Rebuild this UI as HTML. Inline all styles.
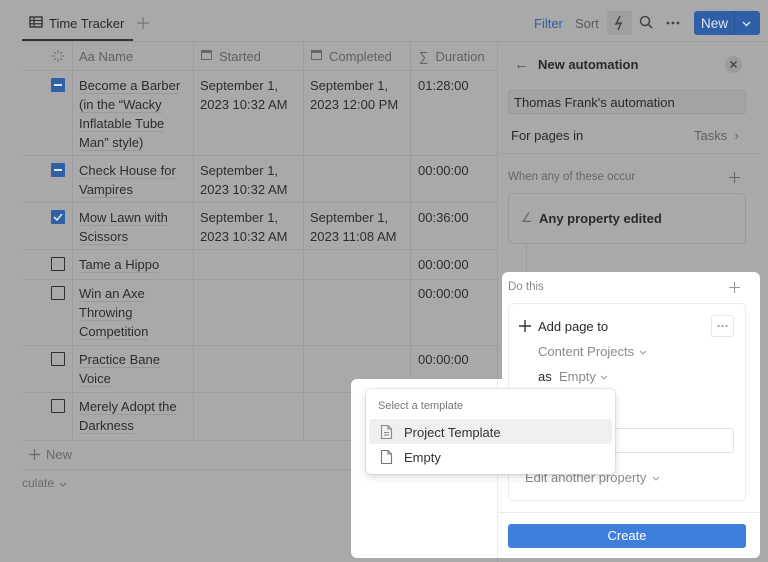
<!DOCTYPE html>
<html><head><meta charset="utf-8"><style>
*{box-sizing:border-box;margin:0;padding:0}
svg{display:block}
body{width:768px;height:562px;overflow:hidden;background:#a9a9a9;font-family:"Liberation Sans",sans-serif;color:#2a2a28;position:relative;font-size:13px}
.a{position:absolute;white-space:nowrap}
.vl{position:absolute;width:1px;background:#9d9d9d}
.hl{position:absolute;height:1px;background:#9d9d9d}
.cell{position:absolute;line-height:19px;font-size:13px;color:#2d2d2b}
.u{border-bottom:1px solid #9a9a9a}
.cb{position:absolute;width:14px;height:14px;border:1.5px solid #303030;border-radius:1px}
.cbf{position:absolute;width:14px;height:14px;background:#2f5fa6;border-radius:1px}
.g{color:#606060}
.w{position:absolute;background:#fff}
</style></head><body>
<div class="a" style="left:29px;top:16px"><svg width="14" height="12" viewBox="0 0 14 12"><rect x="1" y="1" width="12" height="10" fill="none" stroke="#333" stroke-width="1.4"/><line x1="1" y1="4.5" x2="13" y2="4.5" stroke="#333" stroke-width="1.2"/><line x1="1" y1="7.8" x2="13" y2="7.8" stroke="#333" stroke-width="1.2"/><line x1="5" y1="1" x2="5" y2="11" stroke="#333" stroke-width="1.2"/></svg></div>
<div class="a" style="left:49px;top:16px;font-size:13px;color:#2a2a2a">Time Tracker</div>
<div class="a" style="left:137px;top:17px"><svg width="12" height="12"><path d="M6 0V12M0 6H12" stroke="#777" stroke-width="1.2"/></svg></div>
<div class="hl" style="left:22px;top:39px;width:111px;height:2px;background:#333"></div>
<div class="hl" style="left:22px;top:41px;width:746px"></div>
<div class="a" style="left:534px;top:16px;color:#2e5fa3">Filter</div>
<div class="a" style="left:575px;top:16px;color:#5a5a5a">Sort</div>
<div class="a" style="left:607px;top:11px;width:25px;height:24px;background:#9f9f9f"></div>
<div class="a" style="left:613px;top:14px"><svg width="12" height="18" viewBox="0 0 12 18"><path d="M7 2 L3 10 L8 9 L5 16" fill="none" stroke="#444" stroke-width="1.5"/></svg></div>
<div class="a" style="left:639px;top:15px"><svg width="14" height="14"><circle cx="6" cy="6" r="4.5" fill="none" stroke="#444" stroke-width="1.5"/><line x1="9.3" y1="9.3" x2="13" y2="13" stroke="#444" stroke-width="1.5"/></svg></div>
<div class="a" style="left:666px;top:21px"><svg width="14" height="4"><circle cx="2" cy="2" r="1.4" fill="#444"/><circle cx="7" cy="2" r="1.4" fill="#444"/><circle cx="12" cy="2" r="1.4" fill="#444"/></svg></div>
<div class="a" style="left:694px;top:11px;width:66px;height:24px;background:#2f5fa6;border-radius:3px"></div>
<div class="a" style="left:701px;top:16px;color:#dfe6f2;font-size:13.5px">New</div>
<div class="vl" style="left:734px;top:11px;height:24px;background:#285290"></div>
<div class="a" style="left:742px;top:21px"><svg width="9" height="6"><path d="M1 1L4.5 4.5L8 1" fill="none" stroke="#dfe6f2" stroke-width="1.4"/></svg></div>

<div class="vl" style="left:72px;top:41px;height:399px"></div>
<div class="vl" style="left:193px;top:41px;height:399px"></div>
<div class="vl" style="left:303px;top:41px;height:399px"></div>
<div class="vl" style="left:410px;top:41px;height:399px"></div>
<div class="vl" style="left:497px;top:41px;height:521px"></div>
<div class="hl" style="left:22px;top:70px;width:475px"></div>
<div class="hl" style="left:22px;top:155px;width:475px"></div>
<div class="hl" style="left:22px;top:202px;width:475px"></div>
<div class="hl" style="left:22px;top:249px;width:475px"></div>
<div class="hl" style="left:22px;top:279px;width:475px"></div>
<div class="hl" style="left:22px;top:345px;width:475px"></div>
<div class="hl" style="left:22px;top:392px;width:475px"></div>
<div class="hl" style="left:22px;top:440px;width:475px"></div>
<div class="hl" style="left:22px;top:469px;width:475px"></div>

<div class="a" style="left:51px;top:49px"><svg width="14" height="14"><g stroke="#777" stroke-width="1.2"><path d="M7 1V4M7 10V13M1 7H4M10 7H13M2.8 2.8L4.9 4.9M9.1 9.1L11.2 11.2M2.8 11.2L4.9 9.1M9.1 4.9L11.2 2.8"/></g></svg></div>
<div class="a g" style="left:79px;top:49px">Aa Name</div>
<div class="a" style="left:201px;top:50px;width:11px;height:10px;border:1.3px solid #666;border-top-width:3px"></div>
<div class="a g" style="left:219px;top:49px">Started</div>
<div class="a" style="left:311px;top:50px;width:11px;height:10px;border:1.3px solid #666;border-top-width:3px"></div>
<div class="a g" style="left:329px;top:49px">Completed</div>
<div class="a g" style="left:419px;top:49px">∑ &nbsp;Duration</div>

<div class="cbf" style="left:51px;top:78px"><div style="margin:6px 3px;height:2px;background:#dfe6f2"></div></div>
<div class="cell" style="left:79px;top:76px"><span class="u">Become a Barber</span><br><span class="u">(in the “Wacky</span><br><span class="u">Inflatable Tube</span><br><span class="u">Man” style)</span></div>
<div class="cell" style="left:200px;top:76px">September 1,<br>2023 10:32 AM</div>
<div class="cell" style="left:310px;top:76px">September 1,<br>2023 12:00 PM</div>
<div class="cell" style="left:418px;top:76px">01:28:00</div>

<div class="cbf" style="left:51px;top:163px"><div style="margin:6px 3px;height:2px;background:#dfe6f2"></div></div>
<div class="cell" style="left:79px;top:161px"><span class="u">Check House for</span><br><span class="u">Vampires</span></div>
<div class="cell" style="left:200px;top:161px">September 1,<br>2023 10:32 AM</div>
<div class="cell" style="left:418px;top:161px">00:00:00</div>

<div class="cbf" style="left:51px;top:210px"><svg width="14" height="14"><path d="M3 7 L6 10 L11 4" fill="none" stroke="#dfe6f2" stroke-width="1.6"/></svg></div>
<div class="cell" style="left:79px;top:208px"><span class="u">Mow Lawn with</span><br><span class="u">Scissors</span></div>
<div class="cell" style="left:200px;top:208px">September 1,<br>2023 10:32 AM</div>
<div class="cell" style="left:310px;top:208px">September 1,<br>2023 11:08 AM</div>
<div class="cell" style="left:418px;top:208px">00:36:00</div>

<div class="cb" style="left:51px;top:257px"></div>
<div class="cell" style="left:79px;top:255px"><span class="u">Tame a Hippo</span></div>
<div class="cell" style="left:418px;top:255px">00:00:00</div>

<div class="cb" style="left:51px;top:286px"></div>
<div class="cell" style="left:79px;top:284px"><span class="u">Win an Axe</span><br><span class="u">Throwing</span><br><span class="u">Competition</span></div>
<div class="cell" style="left:418px;top:284px">00:00:00</div>

<div class="cb" style="left:51px;top:352px"></div>
<div class="cell" style="left:79px;top:350px"><span class="u">Practice Bane</span><br><span class="u">Voice</span></div>
<div class="cell" style="left:418px;top:350px">00:00:00</div>

<div class="cb" style="left:51px;top:399px"></div>
<div class="cell" style="left:79px;top:397px"><span class="u">Merely Adopt the</span><br><span class="u">Darkness</span></div>

<div class="a" style="left:29px;top:449px"><svg width="11" height="11"><path d="M5.5 0V11M0 5.5H11" stroke="#6a6a6a" stroke-width="1.2"/></svg></div>
<div class="a" style="left:46px;top:447px;color:#6a6a6a;font-size:13px">New</div>
<div class="a" style="left:22px;top:476px;color:#6a6a6a;font-size:12px">culate</div>
<div class="a" style="left:59px;top:482px"><svg width="8" height="5"><path d="M1 1L4 4L7 1" fill="none" stroke="#6a6a6a"/></svg></div>

<div class="a" style="left:514px;top:56px;color:#555;font-size:15px">←</div>
<div class="a" style="left:538px;top:57px;font-weight:bold;color:#2a2a2a">New automation</div>
<div class="a" style="left:725px;top:56px;width:17px;height:17px;border-radius:50%;background:#9c9c9c"><svg width="17" height="17"><path d="M5.5 5.5L11.5 11.5M11.5 5.5L5.5 11.5" stroke="#444" stroke-width="1.4"/></svg></div>
<div class="a" style="left:508px;top:90px;width:238px;height:24px;background:#a3a3a3;border:1px solid #999;border-radius:3px"></div>
<div class="a" style="left:514px;top:95px;color:#2a2a2a">Thomas Frank's automation</div>
<div class="a" style="left:511px;top:128px;color:#2a2a2a">For pages in</div>
<div class="a" style="left:694px;top:128px;color:#626262">Tasks &nbsp;›</div>
<div class="hl" style="left:497px;top:153px;width:263px"></div>
<div class="a" style="left:508px;top:171px;color:#666;font-size:11.5px">When any of these occur</div>
<div class="a" style="left:729px;top:172px"><svg width="11" height="11"><path d="M5.5 0V11M0 5.5H11" stroke="#666" stroke-width="1.1"/></svg></div>
<div class="a" style="left:508px;top:193px;width:238px;height:51px;border:1px solid #9a9a9a;border-radius:5px"></div>
<div class="a" style="left:521px;top:210px;color:#666">∠</div>
<div class="a" style="left:539px;top:211px;font-weight:bold;color:#2a2a2a">Any property edited</div>
<div class="vl" style="left:526px;top:244px;height:28px"></div>

<div class="w" style="left:502px;top:272px;width:258px;height:286px;border-radius:6px"></div>
<div class="w" style="left:351px;top:379px;width:160px;height:179px;border-radius:6px 0 0 6px"></div>
<div class="vl" style="left:497px;top:379px;height:179px;background:#ececec"></div>
<div class="a" style="left:508px;top:281px;color:#8a8a8a;font-size:11.5px">Do this</div>
<div class="a" style="left:729px;top:282px"><svg width="11" height="11"><path d="M5.5 0V11M0 5.5H11" stroke="#999" stroke-width="1.1"/></svg></div>
<div class="a" style="left:508px;top:303px;width:238px;height:198px;border:1px solid #ececec;border-radius:5px"></div>
<div class="a" style="left:519px;top:320px"><svg width="12" height="12"><path d="M6 0V12M0 6H12" stroke="#333" stroke-width="1.4"/></svg></div>
<div class="a" style="left:538px;top:319px;color:#2a2a2a">Add page to</div>
<div class="a" style="left:711px;top:315px;width:23px;height:22px;border:1px solid #e5e5e5;border-radius:3px"><svg width="21" height="20"><circle cx="6.5" cy="10" r="1" fill="#888"/><circle cx="10.5" cy="10" r="1" fill="#888"/><circle cx="14.5" cy="10" r="1" fill="#888"/></svg></div>
<div class="a" style="left:538px;top:344px;color:#8a8a8a">Content Projects</div>
<div class="a" style="left:639px;top:350px"><svg width="8" height="5"><path d="M1 1L4 4L7 1" fill="none" stroke="#999"/></svg></div>
<div class="a" style="left:538px;top:369px;color:#2a2a2a">as</div>
<div class="a" style="left:559px;top:369px;color:#8a8a8a">Empty</div>
<div class="a" style="left:600px;top:375px"><svg width="8" height="5"><path d="M1 1L4 4L7 1" fill="none" stroke="#999"/></svg></div>
<div class="a" style="left:520px;top:428px;width:214px;height:25px;border:1px solid #e3e3e3;border-radius:3px"></div>
<div class="a" style="left:525px;top:470px;color:#8a8a8a">Edit another property</div>
<div class="a" style="left:652px;top:476px"><svg width="8" height="5"><path d="M1 1L4 4L7 1" fill="none" stroke="#999"/></svg></div>
<div class="hl" style="left:497px;top:512px;width:263px;background:#ececec"></div>
<div class="a" style="left:508px;top:524px;width:238px;height:24px;background:#3f7fdc;border-radius:3px;color:#fff;text-align:center;line-height:24px;font-size:13px">Create</div>

<div class="a" style="left:366px;top:389px;width:249px;height:85px;background:#fff;border-radius:5px;box-shadow:0 0 0 1px rgba(0,0,0,.07),0 3px 8px rgba(0,0,0,.15)"></div>
<div class="a" style="left:378px;top:400px;color:#777;font-size:11px">Select a template</div>
<div class="a" style="left:369px;top:419px;width:243px;height:25px;background:#efefef;border-radius:3px"></div>
<div class="a" style="left:380px;top:424px"><svg width="13" height="16" viewBox="0 0 13 16"><path d="M1.5 1.5 H8 L11.5 5 V14.5 H1.5 Z M8 1.5 V5 H11.5" fill="none" stroke="#888" stroke-width="1.1"/><line x1="4" y1="8.5" x2="9" y2="8.5" stroke="#888"/><line x1="4" y1="11" x2="9" y2="11" stroke="#888"/></svg></div>
<div class="a" style="left:404px;top:425px;color:#333">Project Template</div>
<div class="a" style="left:380px;top:449px"><svg width="13" height="16" viewBox="0 0 13 16"><path d="M1.5 1.5 H8 L11.5 5 V14.5 H1.5 Z M8 1.5 V5 H11.5" fill="none" stroke="#777" stroke-width="1.1"/></svg></div>
<div class="a" style="left:404px;top:450px;color:#333">Empty</div>
</body></html>
